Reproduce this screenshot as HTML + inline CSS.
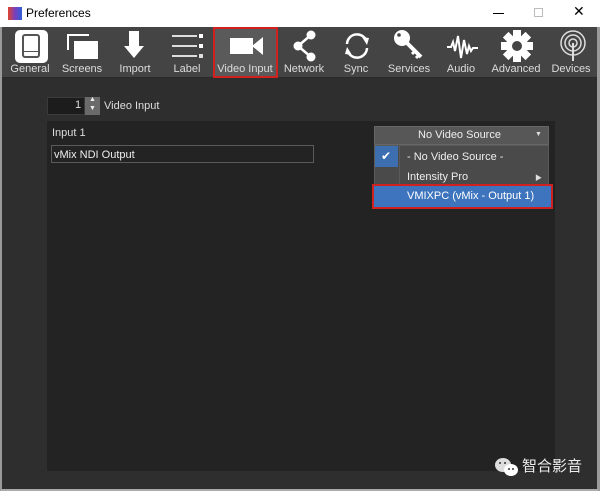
<!DOCTYPE html>
<html><head><style>
*{margin:0;padding:0;box-sizing:border-box}
body{width:600px;height:491px;overflow:hidden;background:#fff;font-family:"Liberation Sans","Noto Sans CJK SC",sans-serif;position:relative}
.abs{position:absolute}
.tb{left:0;top:0;width:600px;height:27px;background:#fff}
.win{left:0;top:27px;width:600px;height:464px;background:#2e2e2e;border-left:2px solid #9a9a9a;border-right:3px solid #9a9a9a;border-bottom:2px solid #aaa}
.tool{left:2px;top:27px;width:595px;height:51px;background:#444;border-bottom:1px solid #2a2a2a}
.lbl{position:absolute;top:36px;font-size:11px;color:#ddd;transform:translateX(-50%);white-space:nowrap}
.ic{position:absolute}
.inner{left:47px;top:121px;width:508px;height:350px;background:#232323}
.t{color:#ddd;font-size:11px;position:absolute;white-space:nowrap}
</style></head><body>
<div class="abs tb">
 <div class="abs" style="left:8px;top:7px;width:14px;height:13px;background:linear-gradient(90deg,#e0442b,#7a3fbf 50%,#2f5fd8)"></div>
 <div class="abs" style="left:26px;top:6px;font-size:12px;color:#000">Preferences</div>
 <div class="abs" style="left:493px;top:13px;width:11px;height:1px;background:#000"></div>
 <div class="abs" style="left:534px;top:8px;width:9px;height:9px;border:1px solid #bbb"></div>
 <div class="abs" style="left:573px;top:3px;font-size:14px;color:#000">✕</div>
</div>
<div class="abs win"></div>
<div class="abs tool">
 <!-- General -->
 <div class="ic" style="left:13px;top:3px;width:33px;height:33px;background:#fff;border-radius:5px"></div>
 <div class="ic" style="left:20px;top:7px;width:18px;height:24px;border:2px solid #555;border-radius:3px"></div>
 <div class="ic" style="left:21px;top:24px;width:16px;height:1px;background:#555"></div>
 <span class="lbl" style="left:28px">General</span>
 <!-- Screens -->
 <div class="ic" style="left:65px;top:7px;width:22px;height:16px;border:2px solid #fff;border-right:none;border-bottom:none"></div>
 <div class="ic" style="left:72px;top:14px;width:24px;height:18px;background:#fff"></div>
 <span class="lbl" style="left:80px">Screens</span>
 <!-- Import -->
 <div class="ic" style="left:127px;top:4px;width:10px;height:16px;background:#fff"></div>
 <div class="ic" style="left:122px;top:19px;width:0;height:0;border-left:10px solid transparent;border-right:10px solid transparent;border-top:12px solid #fff"></div>
 <span class="lbl" style="left:133px">Import</span>
 <!-- Label -->
 <div class="ic" style="left:170px;top:8px;width:25px;height:2px;background:#ddd"></div>
 <div class="ic" style="left:170px;top:18px;width:25px;height:2px;background:#ddd"></div>
 <div class="ic" style="left:170px;top:28px;width:25px;height:2px;background:#ddd"></div>
 <div class="ic" style="left:197px;top:7px;width:4px;height:4px;background:#fff"></div>
 <div class="ic" style="left:197px;top:17px;width:4px;height:4px;background:#fff"></div>
 <div class="ic" style="left:197px;top:27px;width:4px;height:4px;background:#ddd"></div>
 <span class="lbl" style="left:185px">Label</span>
 <!-- Video Input -->
 <div class="ic" style="left:211px;top:0;width:65px;height:51px;background:#5a5a5a;border:2px solid #d02020"></div>
 <div class="ic" style="left:228px;top:11px;width:23px;height:16px;background:#fff"></div>
 <div class="ic" style="left:250px;top:10px;width:0;height:0;border-top:9px solid transparent;border-bottom:9px solid transparent;border-right:11px solid #fff"></div>
 <span class="lbl" style="left:243px">Video Input</span>
 <!-- Network -->
 <svg class="ic" style="left:290px;top:3px" width="26" height="32"><circle cx="19" cy="5" r="4.5" fill="#fff"/><circle cx="6" cy="16" r="4.5" fill="#fff"/><circle cx="19" cy="27" r="4.5" fill="#fff"/><path d="M19 5L6 16L19 27" stroke="#fff" stroke-width="2.5" fill="none"/></svg>
 <span class="lbl" style="left:302px">Network</span>
 <!-- Sync -->
 <svg class="ic" style="left:340px;top:4px" width="30" height="30"><path d="M5 13A10 10 0 0 1 24 9M25 17A10 10 0 0 1 6 21" stroke="#fff" stroke-width="2.5" fill="none"/><path d="M20 6l7 1-2 7z M10 24l-7-1 2-7z" fill="#fff"/></svg>
 <span class="lbl" style="left:354px">Sync</span>
 <!-- Services -->
 <svg class="ic" style="left:391px;top:2px" width="32" height="32"><circle cx="9" cy="9" r="8" fill="#fff"/><circle cx="6" cy="6" r="1.8" fill="#444"/><path d="M12 12L28 28" stroke="#fff" stroke-width="4"/><path d="M22 22l-3 3M26 26l-3 3" stroke="#fff" stroke-width="3"/></svg>
 <span class="lbl" style="left:407px">Services</span>
 <!-- Audio -->
 <svg class="ic" style="left:444px;top:4px" width="34" height="30"><path d="M1 16h4l2-5 2 9 3-15 3 22 3-18 3 14 2-8 2 5 2-3h5" stroke="#fff" stroke-width="2" fill="none"/></svg>
 <span class="lbl" style="left:459px">Audio</span>
 <!-- Advanced -->
 <svg class="ic" style="left:498px;top:2px" width="34" height="34"><g fill="#fff" transform="translate(17 17)"><circle r="11"/><rect x="-4" y="-16" width="8" height="32"/><rect x="-16" y="-4" width="32" height="8"/><rect x="-4" y="-16" width="8" height="32" transform="rotate(45)"/><rect x="-4" y="-16" width="8" height="32" transform="rotate(-45)"/></g><circle cx="17" cy="17" r="5" fill="#444"/></svg>
 <span class="lbl" style="left:514px">Advanced</span>
 <!-- Devices -->
 <svg class="ic" style="left:555px;top:2px" width="32" height="34"><circle cx="16" cy="14" r="12" stroke="#ddd" stroke-width="1.5" fill="none"/><circle cx="16" cy="14" r="8" stroke="#ddd" stroke-width="1.5" fill="none"/><circle cx="16" cy="14" r="4" stroke="#ddd" stroke-width="1.5" fill="none"/><path d="M16 14v18" stroke="#ddd" stroke-width="2"/></svg>
 <span class="lbl" style="left:569px">Devices</span>
</div>
<!-- spinner -->
<div class="abs" style="left:47px;top:97px;width:38px;height:18px;background:#1c1c1c;border:1px solid #3a3a3a"></div>
<div class="t" style="left:75px;top:99px">1</div>
<div class="abs" style="left:85px;top:97px;width:15px;height:18px;background:#6a6a6a"></div>
<div class="t" style="left:89px;top:96px;font-size:7px;color:#eee">▲</div>
<div class="t" style="left:89px;top:105px;font-size:7px;color:#eee">▼</div>
<div class="t" style="left:104px;top:100px">Video Input</div>
<div class="abs inner"></div>
<div class="t" style="left:52px;top:127px">Input 1</div>
<div class="abs" style="left:51px;top:145px;width:263px;height:18px;border:1px solid #5a5a5a;background:#232323"></div>
<div class="t" style="left:54px;top:149px;color:#eee">vMix NDI Output</div>
<!-- dropdown -->
<div class="abs" style="left:374px;top:126px;width:175px;height:19px;background:#575757;border:1px solid #666"></div>
<div class="t" style="left:418px;top:129px;color:#eee">No Video Source</div>
<div class="t" style="left:535px;top:131px;font-size:7px;color:#ddd">▼</div>
<div class="abs" style="left:374px;top:145px;width:175px;height:64px;background:#4a4a4a;border:1px solid #5a5a5a"></div>
<div class="abs" style="left:375px;top:146px;width:23px;height:21px;background:#3d6fb0"></div>
<div class="abs" style="left:399px;top:146px;width:1px;height:40px;background:#5a5a5a"></div>
<div class="t" style="left:381px;top:149px;color:#fff;font-size:12px">✔</div>
<div class="t" style="left:407px;top:151px;color:#eee">- No Video Source -</div>
<div class="t" style="left:407px;top:171px;color:#eee">Intensity Pro</div>
<div class="t" style="left:535px;top:173px;font-size:7px;color:#ddd">▶</div>
<div class="abs" style="left:372px;top:184px;width:181px;height:25px;background:#3d74bd;border:2px solid #d02020"></div>
<div class="t" style="left:407px;top:190px;color:#fff">VMIXPC (vMix - Output 1)</div>
<!-- watermark -->
<svg class="abs" style="left:494px;top:456px" width="26" height="22"><ellipse cx="9" cy="9" rx="8" ry="7" fill="#ddd"/><ellipse cx="17" cy="14" rx="7" ry="6" fill="#fff"/><circle cx="6" cy="7" r="1" fill="#333"/><circle cx="11" cy="7" r="1" fill="#333"/><circle cx="15" cy="13" r="1" fill="#333"/><circle cx="19" cy="13" r="1" fill="#333"/></svg>
<div class="abs" style="left:522px;top:455px;font-size:15px;color:#eee">智合影音</div>
</body></html>
